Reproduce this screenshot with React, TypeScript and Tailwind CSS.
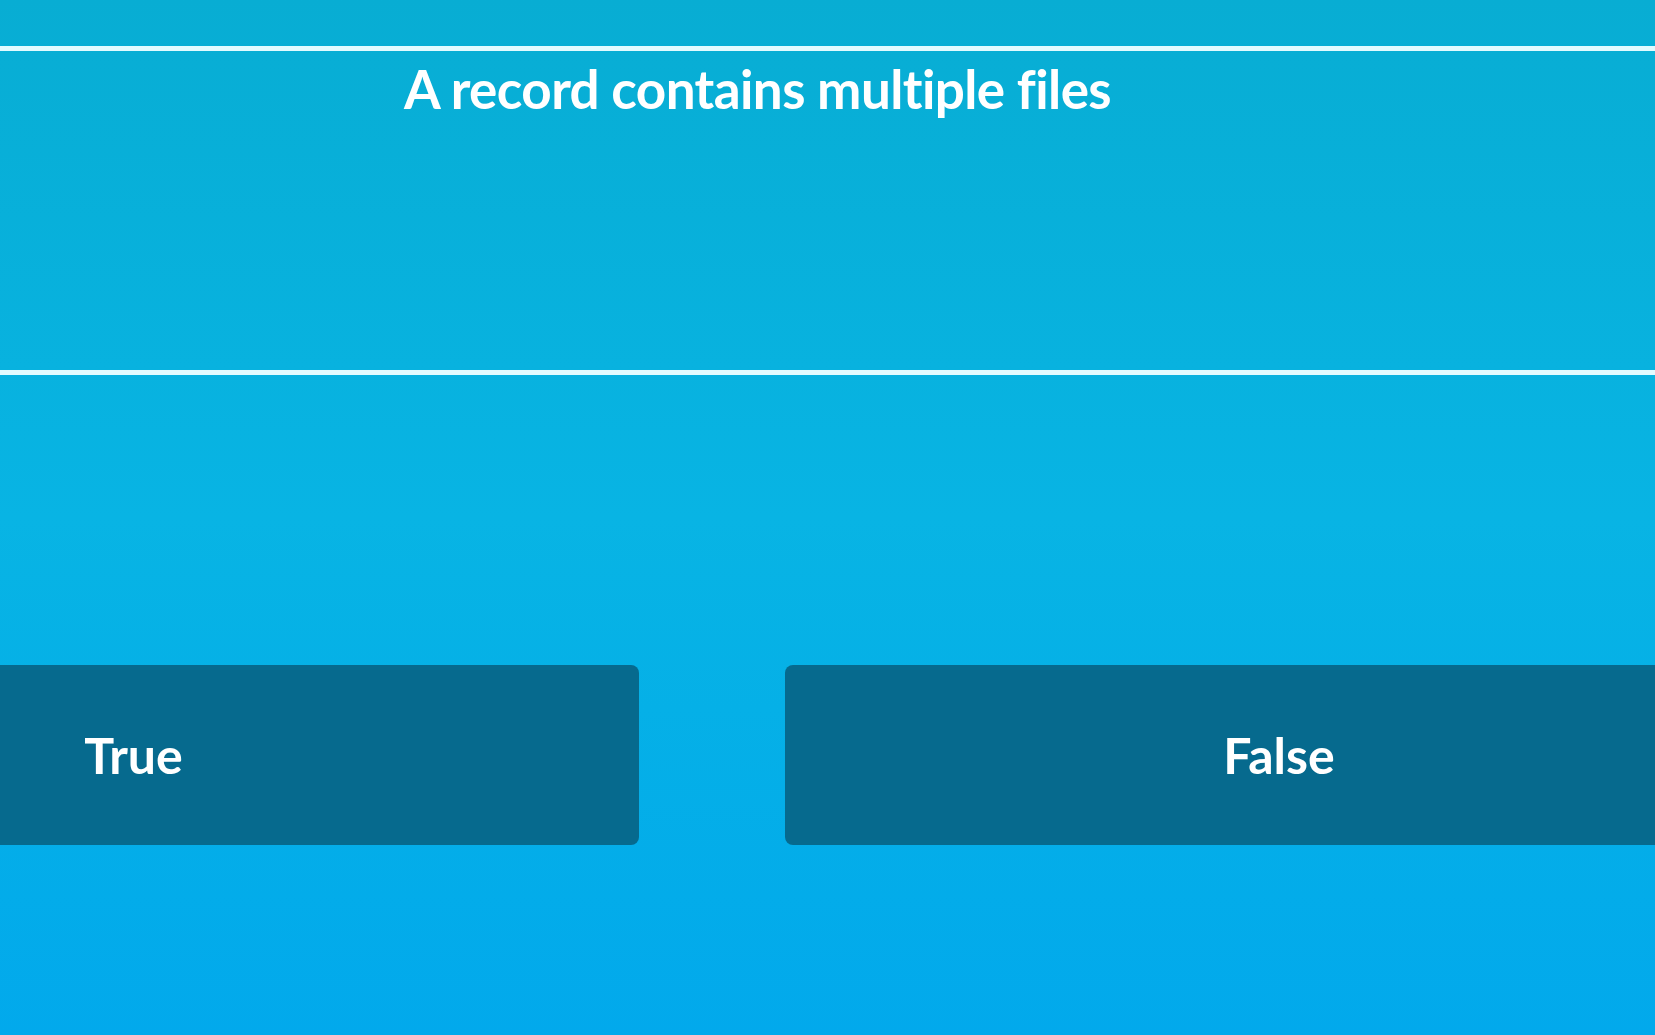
export default function App() {
  return (
    <div
      className="relative h-[1035px] w-[1655px] overflow-hidden bg-gradient-to-b from-[#08add3] via-[#08b4e4] to-[#02a9ec] text-white"
      style={{ fontFamily: 'Lato, "Open Sans", sans-serif' }}
    >
      {/* Question header */}
      <div className="pt-[46px]">
        <div className="h-[5px] w-full bg-[#e2fbff]" />
        <div className="pl-[404px] pt-[4px]">
          <h1 className="text-[53px] font-bold leading-[68px] tracking-[-0.6px]">
            A record contains multiple files
          </h1>
        </div>
      </div>

      {/* Empty area under the question */}
      <div className="h-[247px]" />
      <div className="h-[5px] w-full bg-[#e2fbff]" />

      {/* Answers */}
      <div className="mt-[290px] ml-[-372px] flex gap-[146px]">
        <button className="flex h-[180px] w-[1011px] shrink-0 items-center justify-center rounded-[8px] bg-[#066a8e] text-[50px] font-bold text-white">
          True
        </button>
        <button className="flex h-[180px] w-[988px] shrink-0 items-center justify-center rounded-[8px] bg-[#066a8e] text-[50px] font-bold text-white">
          False
        </button>
      </div>
    </div>
  );
}
